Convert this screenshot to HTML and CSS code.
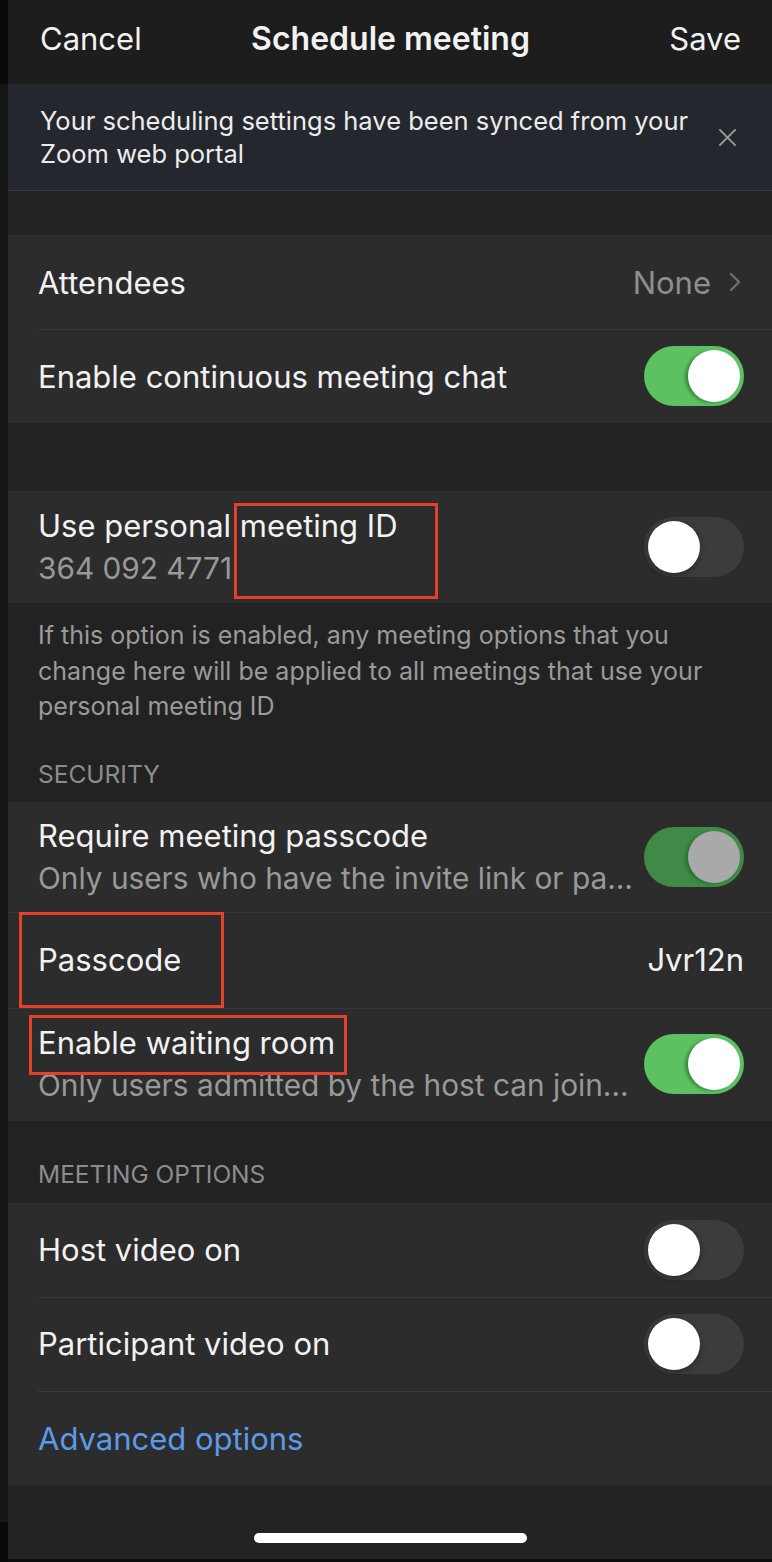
FILE: index.html
```html
<!DOCTYPE html>
<html>
<head>
<meta http-equiv="Content-Type" content="text/html; charset=utf-8"/>
<title>Schedule meeting</title>
<link rel="stylesheet" href="styles.css">
</head>
<body>
<div class="page">
  <div class="edge"></div>

  <div class="screen">
    <header class="nav">
      <span class="nav-btn">Cancel</span>
      <span class="nav-title">Schedule meeting</span>
      <span class="nav-btn save">Save</span>
    </header>

    <div class="banner">
      <p>Your scheduling settings have been synced from your Zoom web portal</p>
      <svg class="close" width="20" height="20" viewBox="0 0 20 20">
        <path d="M2 2 L18 18 M18 2 L2 18" stroke="#9a9b9d" stroke-width="2" stroke-linecap="round"/>
      </svg>
    </div>

    <div class="gap gap-top"></div>

    <section class="group">
      <div class="row">
        <span class="label">Attendees</span>
        <span class="value muted">None
          <svg class="chev" width="12" height="20" viewBox="0 0 12 20">
            <polyline points="2,2 10,10 2,18" fill="none" stroke="#6f6f6f" stroke-width="2.4" stroke-linecap="round" stroke-linejoin="round"/>
          </svg>
        </span>
      </div>
      <div class="row">
        <span class="label">Enable continuous meeting chat</span>
        <span class="toggle on"></span>
      </div>
    </section>

    <div class="gap gap-mid"></div>

    <section class="group">
      <div class="row tall">
        <div class="text">
          <span class="label">Use personal meeting ID</span>
          <span class="sub">364 092 4771</span>
        </div>
        <span class="toggle"></span>
      </div>
    </section>

    <p class="note">If this option is enabled, any meeting options that you change here will be applied to all meetings that use your personal meeting ID</p>

    <h3 class="section-title">SECURITY</h3>

    <section class="group full-lines">
      <div class="row row-passcode-req">
        <div class="text">
          <span class="label">Require meeting passcode</span>
          <span class="sub">Only users who have the invite link or pa...</span>
        </div>
        <span class="toggle on locked"></span>
      </div>
      <div class="row row-passcode">
        <span class="label">Passcode</span>
        <span class="value">Jvr12n</span>
      </div>
      <div class="row row-waiting">
        <div class="text">
          <span class="label">Enable waiting room</span>
          <span class="sub">Only users admitted by the host can join...</span>
        </div>
        <span class="toggle on"></span>
      </div>
    </section>

    <h3 class="section-title options">MEETING OPTIONS</h3>

    <section class="group">
      <div class="row">
        <span class="label">Host video on</span>
        <span class="toggle"></span>
      </div>
      <div class="row">
        <span class="label">Participant video on</span>
        <span class="toggle"></span>
      </div>
      <div class="row row-link">
        <span class="link">Advanced options</span>
      </div>
    </section>

    <div class="home">
      <span class="home-bar"></span>
    </div>
  </div>

  <!-- red highlight boxes drawn over the screenshot -->
  <div class="mark mark-id"></div>
  <div class="mark mark-passcode"></div>
  <div class="mark mark-waiting"></div>
</div>
</body>
</html>
```

FILE: styles.css
```css
html, body {
  margin: 0;
  padding: 0;
  background: #0b0b0b;
}

body {
  font-family: Inter, "Noto Sans", sans-serif;
  color: #f2f2f2;
  -webkit-font-smoothing: antialiased;
}

.page {
  position: relative;
  display: flex;
  width: 772px;
  height: 1562px;
  overflow: hidden;
}

.edge {
  width: 8px;
  flex: none;
  background: linear-gradient(to bottom, #0a0a0a 0 84px, #161616 84px 1522px, #0a0a0a 1522px);
}

.screen {
  flex: 1;
  min-width: 0;
  display: flex;
  flex-direction: column;
  background: #222222;
}

/* top bar */
.nav {
  height: 84px;
  display: grid;
  grid-template-columns: 1fr auto 1fr;
  align-items: center;
  padding: 0 31px 8px 32px;
  box-sizing: border-box;
  background: #1d1d1d;
  font-size: 31px;
}

.nav-title {
  font-weight: 600;
  font-size: 32px;
}

.save {
  justify-self: end;
}

/* synced banner */
.banner {
  height: 107px;
  display: flex;
  align-items: center;
  padding: 0 35px 0 32px;
  box-sizing: border-box;
  background: #24272d;
  border-bottom: 1px solid #3b3c3f;
}

.banner p {
  flex: 1;
  min-width: 0;
  margin: 0;
  padding-right: 14px;
  font-size: 25.5px;
  line-height: 33px;
  color: #ececec;
}

.close {
  flex: none;
  width: 19px;
  height: 19px;
}

.gap-top {
  height: 44px;
}

.gap-mid {
  height: 68px;
}

/* settings groups */
.group {
  background: #2c2c2c;
}

.row {
  height: 94px;
  display: flex;
  align-items: center;
  justify-content: space-between;
  padding: 0 28px 0 30px;
  box-sizing: border-box;
}

.row + .row {
  background: linear-gradient(#3a3a3a, #3a3a3a) 30px 0 / 100% 1px no-repeat;
}

.full-lines .row + .row {
  background: linear-gradient(#363636, #363636) 0 0 / 100% 1px no-repeat;
}

.label {
  font-size: 31px;
  white-space: nowrap;
}

.value {
  font-size: 31px;
  display: flex;
  align-items: center;
  gap: 18px;
}

.muted {
  color: #8e8e8e;
  padding-right: 3px;
}

.text {
  flex: 1;
  min-width: 0;
  display: flex;
  flex-direction: column;
  margin-right: 8px;
  line-height: 42px;
}

.sub {
  font-size: 29.8px;
  color: #999999;
  white-space: nowrap;
}

.tall {
  height: 112px;
}

.row-passcode-req {
  height: 110px;
}

.row-passcode {
  height: 96px;
}

.row-waiting {
  height: 113px;
}

.row-link {
  height: 95px;
}

.link {
  font-size: 31px;
  color: #5b9ae9;
}

/* toggles */
.toggle {
  position: relative;
  flex: none;
  width: 100px;
  height: 60px;
  border-radius: 30px;
  background: #3c3c3c;
}

.toggle::after {
  content: "";
  position: absolute;
  top: 4px;
  left: 4px;
  width: 52px;
  height: 52px;
  border-radius: 50%;
  background: #ffffff;
  box-shadow: 0 2px 6px rgba(0, 0, 0, 0.35);
}

.toggle.on {
  background: #5cc261;
}

.toggle.on::after {
  left: 44px;
  box-shadow: -3px 1px 3px rgba(30, 90, 35, 0.5);
}

.toggle.locked {
  background: #3f8a47;
}

.toggle.locked::after {
  background: #a9a9a9;
}

/* notes and section headers */
.note {
  margin: 0;
  padding: 15px 36px 0 30px;
  font-size: 25px;
  line-height: 35.5px;
  color: #9a9a9a;
}

.section-title {
  margin: 0;
  padding: 34px 30px 13px;
  font-size: 24.5px;
  line-height: 30px;
  font-weight: 400;
  color: #8c8c8c;
}

.section-title.options {
  padding-top: 38px;
  padding-bottom: 14px;
}

/* home indicator */
.home {
  flex: 1;
  display: flex;
  justify-content: center;
  align-items: flex-end;
  padding-bottom: 16px;
  background: #232323;
  border-bottom: 3px solid #0e0e0e;
}

.home-bar {
  width: 273px;
  height: 10px;
  border-radius: 5px;
  background: #ffffff;
}

/* annotation boxes */
.mark {
  position: absolute;
  border: 3px solid #e4412b;
  box-sizing: border-box;
}

.mark-id {
  left: 234px;
  top: 503px;
  width: 204px;
  height: 96px;
}

.mark-passcode {
  left: 19px;
  top: 912px;
  width: 205px;
  height: 96px;
}

.mark-waiting {
  left: 29px;
  top: 1015px;
  width: 318px;
  height: 60px;
}
```
